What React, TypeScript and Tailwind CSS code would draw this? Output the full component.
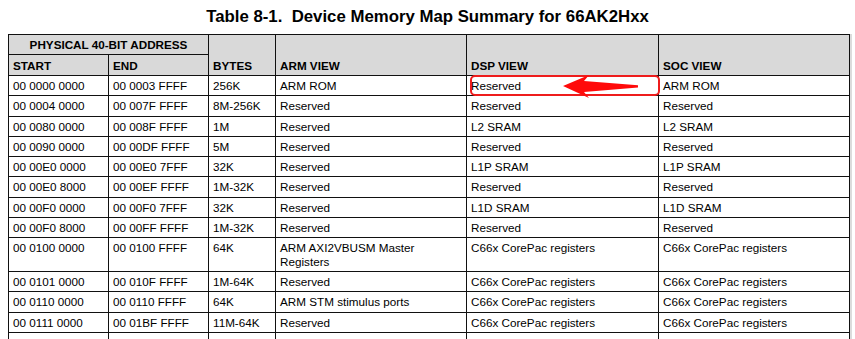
import React from "react";

type Row = [string, string, string, React.ReactNode, string, string];

const rows: Row[] = [
  ["00 0000 0000", "00 0003 FFFF", "256K", "ARM ROM", "Reserved", "ARM ROM"],
  ["00 0004 0000", "00 007F FFFF", "8M-256K", "Reserved", "Reserved", "Reserved"],
  ["00 0080 0000", "00 008F FFFF", "1M", "Reserved", "L2 SRAM", "L2 SRAM"],
  ["00 0090 0000", "00 00DF FFFF", "5M", "Reserved", "Reserved", "Reserved"],
  ["00 00E0 0000", "00 00E0 7FFF", "32K", "Reserved", "L1P SRAM", "L1P SRAM"],
  ["00 00E0 8000", "00 00EF FFFF", "1M-32K", "Reserved", "Reserved", "Reserved"],
  ["00 00F0 0000", "00 00F0 7FFF", "32K", "Reserved", "L1D SRAM", "L1D SRAM"],
  ["00 00F0 8000", "00 00FF FFFF", "1M-32K", "Reserved", "Reserved", "Reserved"],
  [
    "00 0100 0000",
    "00 0100 FFFF",
    "64K",
    <>
      ARM AXI2VBUSM Master
      <br />
      Registers
    </>,
    "C66x CorePac registers",
    "C66x CorePac registers",
  ],
  ["00 0101 0000", "00 010F FFFF", "1M-64K", "Reserved", "C66x CorePac registers", "C66x CorePac registers"],
  ["00 0110 0000", "00 0110 FFFF", "64K", "ARM STM stimulus ports", "C66x CorePac registers", "C66x CorePac registers"],
  ["00 0111 0000", "00 01BF FFFF", "11M-64K", "Reserved", "C66x CorePac registers", "C66x CorePac registers"],
  ["00 01C0 0000", "00 01CF FFFF", "1M", "Reserved", "Reserved", "Reserved"],
];

const th = "border border-[#111] bg-[#d9d9d9] font-bold text-left align-bottom px-[4px] pb-[3px] leading-[13.3px]";
const td = "border border-[#111] align-top px-[4px] py-[3px] leading-[13.3px]";

// red callout drawn over the first DSP cell
const Callout = () => (
  <>
    <div className="pointer-events-none absolute left-[3px] top-[-1px] h-[21px] w-[190px] rounded-[5px] border-2 border-[#ee1c1c]" />
    <svg
      className="pointer-events-none absolute left-0 top-0 overflow-visible"
      width="200"
      height="20"
      viewBox="0 0 200 20"
    >
      <polygon
        points="96,10 122,-1 117,5 171,9.3 171,11.5 117,16 122,22"
        fill="#ff0a0a"
      />
    </svg>
  </>
);

export default function App() {
  return (
    <div className="min-h-screen bg-white text-black font-['Liberation_Sans',Arial,sans-serif]">
      <div className="h-[34px] pt-[7px] text-center text-[16.8px] font-bold leading-[20px] whitespace-pre">
        {"Table 8-1.  Device Memory Map Summary for 66AK2Hxx"}
      </div>
      <table className="ml-[8px] w-[841px] table-fixed border-collapse text-[11.7px] shadow-[2px_0_0_0_#dcdcdc]">
        <colgroup>
          <col className="w-[100px]" />
          <col className="w-[100px]" />
          <col className="w-[67px]" />
          <col className="w-[191px]" />
          <col className="w-[192px]" />
          <col className="w-[191px]" />
        </colgroup>
        <thead>
          <tr className="h-[20px]">
            <th colSpan={2} className={th + " !text-center !align-middle !pb-[2px] pt-[2px]"}>
              PHYSICAL 40-BIT ADDRESS
            </th>
            <th rowSpan={2} className={th}>BYTES</th>
            <th rowSpan={2} className={th}>ARM VIEW</th>
            <th rowSpan={2} className={th}>DSP VIEW</th>
            <th rowSpan={2} className={th}>SOC VIEW</th>
          </tr>
          <tr className="h-[21px]">
            <th className={th}>START</th>
            <th className={th}>END</th>
          </tr>
        </thead>
        <tbody>
          {rows.map((r, i) => (
            <tr key={i}>
              <td className={td}>{r[0]}</td>
              <td className={td}>{r[1]}</td>
              <td className={td}>{r[2]}</td>
              <td className={td}>{r[3]}</td>
              <td className={td + (i === 0 ? " relative" : "")}>
                {r[4]}
                {i === 0 && <Callout />}
              </td>
              <td className={td}>{r[5]}</td>
            </tr>
          ))}
        </tbody>
      </table>
    </div>
  );
}
